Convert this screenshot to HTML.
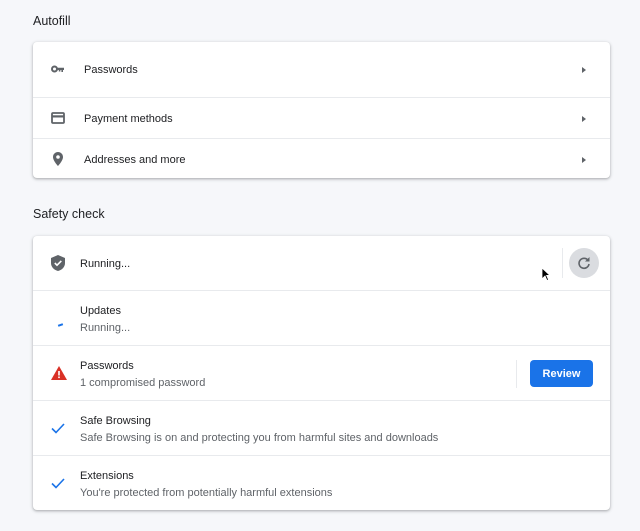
<!DOCTYPE html><html><head><style>
body{margin:0;width:640px;height:531px;background:#f6f7fa;font-family:"Liberation Sans",sans-serif;color:#202124;position:relative;overflow:hidden}
.h{position:absolute;left:33px;font-size:12.5px;color:#202124}
.card{position:absolute;left:33px;width:577px;background:#fff;border-radius:4px;box-shadow:0 1px 2px rgba(60,64,67,.3),0 1px 3px 1px rgba(60,64,67,.12)}
.row{position:absolute;left:0;right:0;border-top:1px solid #e8eaed;font-size:11px}
.row:first-child{border-top:none}
.ic{position:absolute;left:18px}
.t{position:absolute;left:51px}
.t2{position:absolute;left:47px;line-height:17px}
.s{color:#5f6368}
.arr{position:absolute;right:24px;width:0;height:0;border-left:4px solid #5f6368;border-top:3.5px solid transparent;border-bottom:3.5px solid transparent}
</style></head><body>
<div class="h" style="top:14px">Autofill</div>
<div class="card" style="top:42px;height:136px">
 <div class="row" style="top:0;height:55px"><svg class="ic" style="top:22px" width="14" height="10" viewBox="0 0 14 10"><circle cx="3.5" cy="5" r="2.5" fill="none" stroke="#5f6368" stroke-width="2"/><path d="M5.5 3.8h7.5v2.2h-1v2h-1.6v-2h-1v1.5h-1.6v-1.5H5.5z" fill="#5f6368"/></svg><span class="t" style="top:22px">Passwords</span><span class="arr" style="top:25px"></span></div>
 <div class="row" style="top:55px;height:40px"><svg class="ic" style="top:14px" width="14" height="12" viewBox="0 0 14 12"><rect x="1" y="1" width="12" height="10" rx="1" fill="none" stroke="#5f6368" stroke-width="1.8"/><rect x="1" y="3.3" width="12" height="2.2" fill="#5f6368"/></svg><span class="t" style="top:15px">Payment methods</span><span class="arr" style="top:18px"></span></div>
 <div class="row" style="top:96px;height:40px"><svg class="ic" style="top:13px;left:20px" width="10" height="14" viewBox="0 0 10 14"><path d="M5 0C2.2 0 0 2.2 0 5c0 3.8 5 9 5 9s5-5.2 5-9c0-2.8-2.2-5-5-5zm0 6.8A1.8 1.8 0 1 1 5 3.2a1.8 1.8 0 0 1 0 3.6z" fill="#5f6368"/></svg><span class="t" style="top:15px">Addresses and more</span><span class="arr" style="top:18px"></span></div>
</div>
<div class="h" style="top:207px">Safety check</div>
<div class="card" style="top:236px;height:274px">
 <div class="row" style="top:0;height:54px"><svg class="ic" style="top:19px" width="14" height="16" viewBox="0 0 14 16"><path d="M7 0L0 3v5c0 4 3 7 7 8 4-1 7-4 7-8V3z" fill="#5f6368"/><path d="M3.8 8l2.2 2.2 4.3-4.3" fill="none" stroke="#fff" stroke-width="1.6"/></svg><span class="t2" style="top:20px">Running...</span>
  <div style="position:absolute;left:529px;top:12px;width:1px;height:30px;background:#e8eaed"></div>
  <div style="position:absolute;left:536px;top:12px;width:30px;height:30px;border-radius:50%;background:#dadce0"><svg style="position:absolute;left:8px;top:8px" width="14" height="14" viewBox="0 0 14 14"><path d="M11 4.2A5 5 0 1 0 12 8" fill="none" stroke="#5f6368" stroke-width="1.6"/><path d="M12.5 1v4.5H8z" fill="#5f6368"/></svg></div>
  <svg style="position:absolute;left:508px;top:31px" width="10" height="15" viewBox="0 0 10 15"><path d="M1 1v11l3-3 2 4.5 1.6-.7-2-4.4H9z" fill="#000" stroke="#fff" stroke-width=".8"/></svg></div>
 <div class="row" style="top:54px;height:55px"><div style="position:absolute;left:25px;top:33px;width:5px;height:2px;background:#1a73e8;transform:rotate(-20deg)"></div><div class="t2" style="top:12px">Updates<br><span class="s">Running...</span></div></div>
 <div class="row" style="top:109px;height:55px"><svg class="ic" style="top:20px" width="16" height="14" viewBox="0 0 16 14"><path d="M8 0L16 14H0z" fill="#d93025"/><rect x="7.2" y="5" width="1.6" height="4.5" fill="#fff"/><rect x="7.2" y="10.5" width="1.6" height="1.6" fill="#fff"/></svg><div class="t2" style="top:12px">Passwords<br><span class="s">1 compromised password</span></div>
  <div style="position:absolute;left:483px;top:14px;width:1px;height:28px;background:#e8eaed"></div>
  <div style="position:absolute;left:497px;top:14px;width:63px;height:27px;border-radius:4px;background:#1a73e8;color:#fff;font-weight:bold;font-size:11px;text-align:center;line-height:28px">Review</div></div>
 <div class="row" style="top:164px;height:55px"><svg class="ic" style="top:22px" width="14" height="11" viewBox="0 0 14 11"><path d="M1 5.5l4 4L13 1" fill="none" stroke="#1a73e8" stroke-width="1.6"/></svg><div class="t2" style="top:12px">Safe Browsing<br><span class="s">Safe Browsing is on and protecting you from harmful sites and downloads</span></div></div>
 <div class="row" style="top:219px;height:55px"><svg class="ic" style="top:22px" width="14" height="11" viewBox="0 0 14 11"><path d="M1 5.5l4 4L13 1" fill="none" stroke="#1a73e8" stroke-width="1.6"/></svg><div class="t2" style="top:12px">Extensions<br><span class="s">You're protected from potentially harmful extensions</span></div></div>
</div>
</body></html>
